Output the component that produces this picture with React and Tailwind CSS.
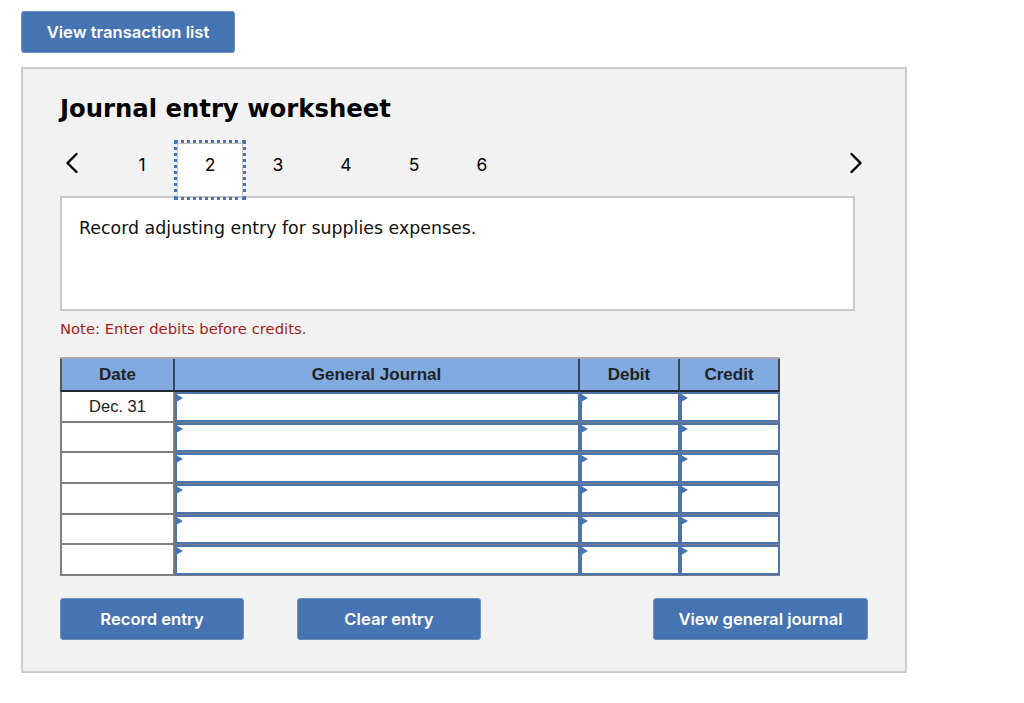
import React from "react";
import { ChevronLeft, ChevronRight } from "lucide-react";

const tabs = [1, 2, 3, 4, 5, 6];
const rows = ["Dec. 31", "", "", "", "", ""];

function BlueButton({ label, className = "" }) {
  return (
    <button className={`h-[42px] bg-[#4674b2] border border-[#6d90c2] rounded-[3px] text-white text-[16.6px] font-semibold font-['Inter',sans-serif] ${className}`}>
      {label}
    </button>
  );
}

function EntryCell() {
  return (
    <div className="h-[30.7px] border-b border-[#707a88]">
      <div className="relative h-full border-2 border-[#4d75ab] bg-white">
        {/* little marker in the corner */}
        <span className="absolute -left-px top-0 w-0 h-0 border-y-[4.5px] border-y-transparent border-l-[7px] border-l-[#4674b2]" />
      </div>
    </div>
  );
}

function HeaderCell({ children, className = "" }) {
  return (
    <div className={`h-[33px] bg-[#80aae0] border-r-2 border-b-2 border-r-[#3b4450] border-b-[#1f2937] flex items-center justify-center text-[17px] font-bold text-[#222] ${className}`}>
      {children}
    </div>
  );
}

export default function App() {
  return (
    <div className="w-[1024px] h-[703px] bg-white pt-[11px] pl-[21px] font-['Liberation_Sans',sans-serif] overflow-hidden">
      <BlueButton label="View transaction list" className="block w-[214px]" />

      {/* Worksheet panel */}
      <div className="mt-[14px] w-[886px] h-[606px] border-2 border-[#cccccc] bg-[#f2f2f2] pl-[37px] pt-[25px]">
        <h1 className="text-[24.3px] leading-[30px] font-bold text-black font-['DejaVu_Sans',sans-serif]">
          Journal entry worksheet
        </h1>

        {/* Tabs */}
        <div className="relative z-10 mt-[16px] flex w-[795px] h-[60px] items-center">
          <ChevronLeft className="w-[36px] h-[36px] shrink-0 ml-[-6.5px] mt-[-15px] text-black" strokeWidth={1.6} />
          <div className="ml-[18.5px] flex">
            {tabs.map((t) =>
              t === 2 ? (
                <div key={t} className="w-[66px] h-[54px] mx-px my-[3px] shrink-0 flex items-center justify-center pb-[9px] bg-white border border-[#c4c4c4] outline-[3px] outline-dotted outline-[#4674b2] text-[17.5px] text-black font-['Inter',sans-serif]">
                  {t}
                </div>
              ) : (
                <div key={t} className="w-[68px] h-[60px] shrink-0 flex items-center justify-center pb-[10px] text-[17.5px] text-black font-['Inter',sans-serif]">
                  {t}
                </div>
              )
            )}
          </div>
          <ChevronRight className="w-[36px] h-[36px] shrink-0 ml-auto mr-[-19px] mt-[-15px] text-black" strokeWidth={1.6} />
        </div>

        {/* Prompt */}
        <div className="mt-[-4px] w-[795px] h-[115px] bg-white border-2 border-[#c8c8c8] pl-[17px] pt-[20px] text-[17.4px] leading-[20px] text-[#111] font-['DejaVu_Sans',sans-serif]">
          Record adjusting entry for supplies expenses.
        </div>

        <p className="mt-[8px] text-[14.8px] leading-[20px] text-[#a61c1c] font-['DejaVu_Sans',sans-serif]">
          Note: Enter debits before credits.
        </p>

        {/* Journal table */}
        <div className="mt-[18px] w-[720px] grid grid-cols-[115px_405px_100px_100px] border-t-2 border-[#a8a8a8]">
          <HeaderCell className="border-l-2 border-l-[#555]">Date</HeaderCell>
          <HeaderCell>General Journal</HeaderCell>
          <HeaderCell>Debit</HeaderCell>
          <HeaderCell>Credit</HeaderCell>

          {rows.map((date, i) => (
            <React.Fragment key={i}>
              <div className="h-[30.7px] bg-white border-2 border-t-0 border-[#808080] flex items-center justify-center text-[16.5px] text-[#222]">{date}</div>
              <EntryCell />
              <EntryCell />
              <EntryCell />
            </React.Fragment>
          ))}
        </div>

        {/* Actions */}
        <div className="mt-[22px] w-[808px] flex">
          <BlueButton label="Record entry" className="w-[184px]" />
          <BlueButton label="Clear entry" className="w-[184px] ml-[53px]" />
          <BlueButton label="View general journal" className="w-[215px] ml-auto" />
        </div>
      </div>
    </div>
  );
}
